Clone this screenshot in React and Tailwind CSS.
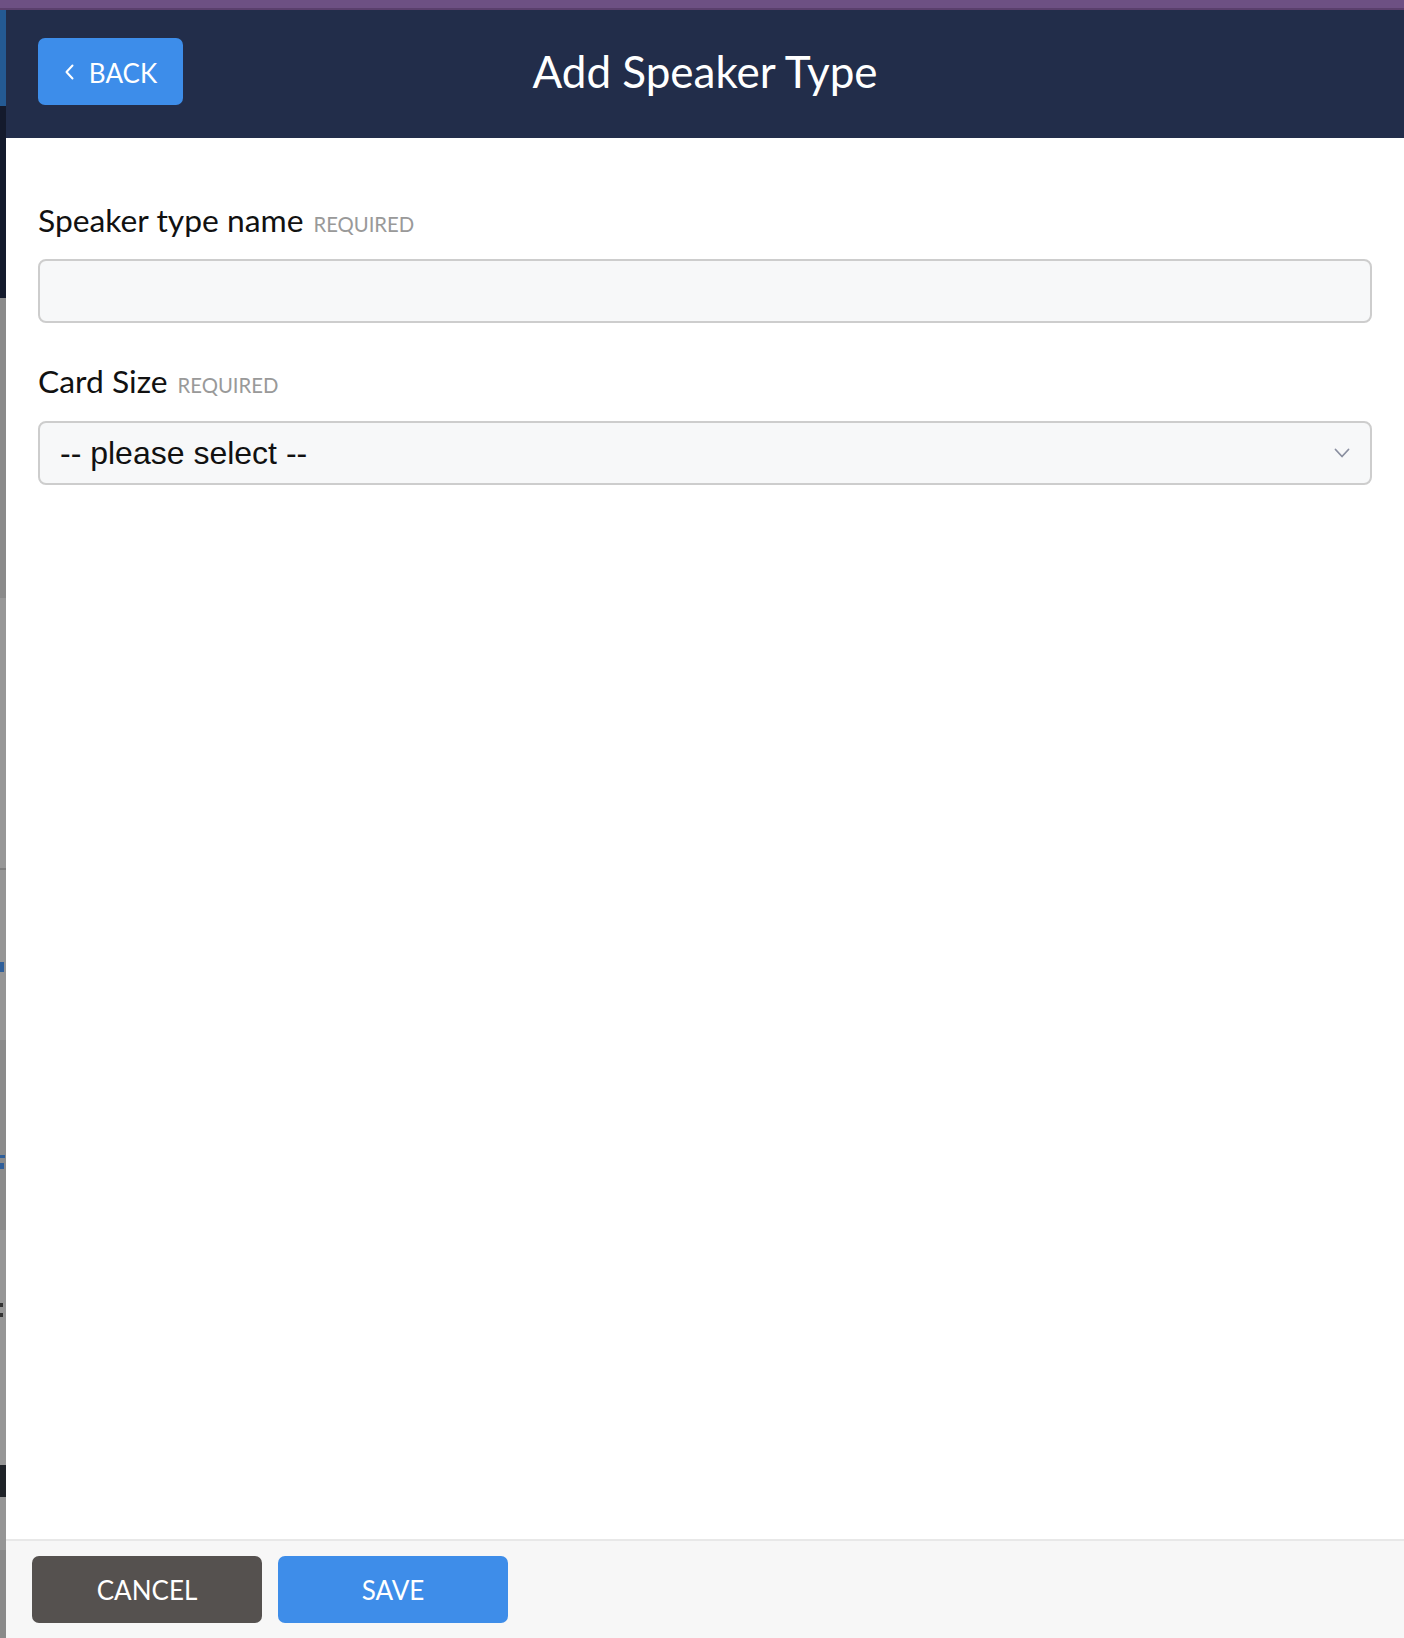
import React from "react";

function LeftStrip() {
  return (
    <div className="w-[6px] flex flex-col shrink-0">
      <div className="h-[96px] bg-[#245a93]" />
      <div className="h-[192px] bg-[#141a2c]" />
      <div className="h-[300px] bg-[#8a8a8a]" />
      <div className="h-[270px] bg-[#979797]" />
      <div className="h-[2px] bg-[#7e7e7e]" />
      <div className="h-[170px] bg-[#959595] relative">
        <div className="absolute left-0 top-[92px] w-[4px] h-[10px] bg-[#2f5f9a]" />
      </div>
      <div className="h-[190px] bg-[#8b8b8b] relative">
        <div className="absolute left-0 top-[115px] w-[5px] h-[3px] bg-[#2f5f9a]" />
        <div className="absolute left-0 top-[123px] w-[4px] h-[6px] bg-[#2f5f9a]" />
      </div>
      <div className="h-[235px] bg-[#969696] relative">
        <div className="absolute left-0 top-[73px] w-[3px] h-[4px] bg-[#333]" />
        <div className="absolute left-0 top-[83px] w-[3px] h-[4px] bg-[#333]" />
      </div>
      <div className="h-[32px] bg-[#1f2328]" />
      <div className="h-[53px] bg-[#959595]" />
      <div className="flex-1 bg-[#8a8a8a]" />
    </div>
  );
}

export default function App() {
  return (
    <div
      className="w-[1404px] h-[1638px] flex flex-col overflow-hidden bg-white"
      style={{ fontFamily: "Lato, 'Open Sans', sans-serif" }}
    >
      <div className="h-[8px] bg-[#6d5083] shrink-0" />
      <div className="h-[2px] bg-[#5a3f6c] shrink-0" />
      <div className="flex flex-1 min-h-0">
        <LeftStrip />
        <div className="flex-1 flex flex-col min-w-0">
          <div className="h-[128px] bg-[#222d4a] relative flex items-start pt-[28px] px-[32px] shrink-0">
            <button className="h-[67px] w-[145px] rounded-[7px] bg-[#3d8dea] text-white flex items-center justify-center gap-[14px] text-[26px] leading-none">
              <svg width="11" height="16" viewBox="0 0 11 16" fill="none">
                <path d="M8.5 1.5 L2.5 8 L8.5 14.5" stroke="white" strokeWidth="2" strokeLinecap="round" strokeLinejoin="round" />
              </svg>
              <span className="pt-[2px]">BACK</span>
            </button>
            <div className="absolute inset-0 flex items-center justify-center pointer-events-none">
              <h1 className="text-white text-[44px] leading-none pb-[6px]">Add Speaker Type</h1>
            </div>
          </div>
          <div className="flex-1 px-[32px] pt-[63px]">
            <div className="flex items-baseline text-[31.8px] leading-[1.2] text-[#111]">
              <span>Speaker type name</span>
              <span className="ml-[10px] text-[20.3px] text-[#999]">REQUIRED</span>
            </div>
            <input
              className="mt-[20px] block w-full h-[64px] rounded-[8px] border-2 border-[#cdcdcd] bg-[#f7f8f9] outline-none"
              type="text"
            />
            <div className="mt-[39px] flex items-baseline text-[31.8px] leading-[1.2] text-[#111]">
              <span>Card Size</span>
              <span className="ml-[10px] text-[20.3px] text-[#999]">REQUIRED</span>
            </div>
            <div className="mt-[21px] h-[64px] rounded-[8px] border-2 border-[#cdcdcd] bg-[#f7f8f9] flex items-center justify-between pl-[20px] pr-[20px]">
              <span
                className="text-[32px] text-[#111] leading-none"
                style={{ fontFamily: "'Liberation Sans', Arial, sans-serif" }}
              >
                -- please select --
              </span>
              <svg width="16" height="10" viewBox="0 0 16 10" fill="none">
                <path d="M1.5 1.5 L8 8.5 L14.5 1.5" stroke="#8a8fa0" strokeWidth="1.8" strokeLinecap="round" strokeLinejoin="round" />
              </svg>
            </div>
          </div>
          <div className="h-[99px] shrink-0 border-t-2 border-[#e8e8e8] bg-[#f7f7f7] px-[26px] pt-[15px] flex gap-[16px]">
            <button className="h-[67px] w-[230px] rounded-[7px] bg-[#55514f] text-white text-[26px] leading-none">
              CANCEL
            </button>
            <button className="h-[67px] w-[230px] rounded-[7px] bg-[#3e8de9] text-white text-[26px] leading-none">
              SAVE
            </button>
          </div>
        </div>
      </div>
    </div>
  );
}
